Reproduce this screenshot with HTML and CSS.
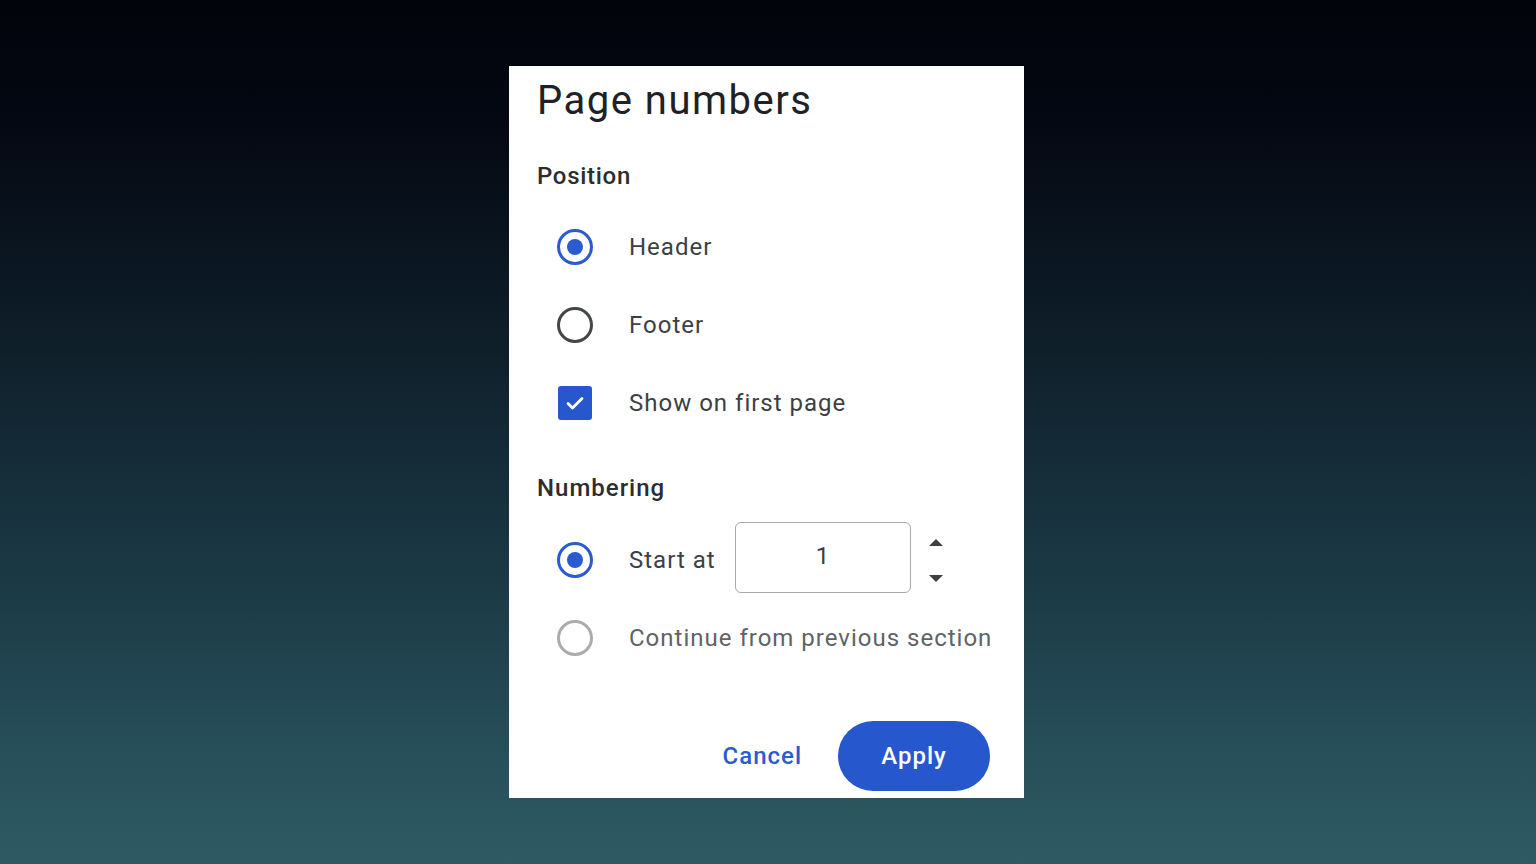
FILE: index.html
```html
<!DOCTYPE html>
<html lang="en">
<head>
<meta charset="utf-8">
<title>Page numbers</title>
<link rel="stylesheet" href="styles.css">
</head>
<body>
<main class="stage">
  <section class="dialog" role="dialog" aria-labelledby="dlg-title">
    <h1 class="dialog-title" id="dlg-title">Page numbers</h1>

    <h2 class="group-title">Position</h2>
    <div class="option">
      <span class="radio checked"></span>
      <span class="label">Header</span>
    </div>
    <div class="option">
      <span class="radio"></span>
      <span class="label">Footer</span>
    </div>
    <div class="option">
      <span class="checkbox">
        <svg viewBox="0 0 24 24" width="24" height="24"><path d="M5 12.5l4.5 4.5L19 7.5" fill="none" stroke="#fff" stroke-width="2.8" stroke-linecap="round" stroke-linejoin="round"/></svg>
      </span>
      <span class="label">Show on first page</span>
    </div>

    <h2 class="group-title numbering">Numbering</h2>
    <div class="option first">
      <span class="radio checked"></span>
      <span class="label">Start at</span>
      <div class="number-field">
        <span class="number-value">1</span>
      </div>
      <div class="spinner">
        <span class="arrow up"></span>
        <span class="arrow down"></span>
      </div>
    </div>
    <div class="option">
      <span class="radio muted"></span>
      <span class="label dim">Continue from previous section</span>
    </div>

    <div class="actions">
      <button class="btn-text" type="button">Cancel</button>
      <button class="btn-filled" type="button">Apply</button>
    </div>
  </section>
</main>
</body>
</html>
```

FILE: styles.css
```css
* { box-sizing: border-box; }

html, body {
  margin: 0;
  height: 100%;
}

body {
  font-family: Roboto, "Liberation Sans", Arial, sans-serif;
  background: linear-gradient(to bottom,
    #02030b 0%,
    #040812 14%,
    #0f1f2a 40%,
    #1b3a46 68%,
    #27505b 88%,
    #2f5963 100%);
  overflow: hidden;
}

.stage {
  height: 100%;
  display: flex;
  justify-content: flex-start;
  padding: 66px 0 0 509px;
}

.dialog {
  width: 515px;
  height: 732px;
  background: #fff;
  padding: 11px 34px 7px 28px;
  display: flex;
  flex-direction: column;
}

.dialog-title {
  margin: 0;
  font-size: 40px;
  line-height: 48px;
  font-weight: 400;
  color: #202124;
  letter-spacing: 1.5px;
}

.group-title {
  margin: 35px 0 16px;
  font-size: 24px;
  line-height: 32px;
  font-weight: 500;
  color: #2b2d30;
  letter-spacing: 0.7px;
}

.group-title.numbering {
  margin-top: 30px;
  margin-bottom: 17px;
  letter-spacing: 1px;
}

.option {
  height: 78px;
  display: flex;
  align-items: center;
  padding-left: 20px;
}

.radio {
  width: 36px;
  height: 36px;
  border-radius: 50%;
  border: 3px solid #444746;
  flex: none;
  display: flex;
  align-items: center;
  justify-content: center;
}

.radio.checked {
  border-color: #2a5bd0;
}

.radio.checked::after {
  content: "";
  width: 16px;
  height: 16px;
  border-radius: 50%;
  background: #2a5bd0;
}

.radio.muted {
  border-color: #acacac;
}

.checkbox {
  width: 34px;
  height: 34px;
  margin-left: 1px;
  margin-right: 1px;
  border-radius: 3px;
  background: #2757cc;
  flex: none;
  display: flex;
  align-items: center;
  justify-content: center;
}

.label {
  margin-left: 36px;
  font-size: 24px;
  color: #3c4043;
  letter-spacing: 1px;
  white-space: nowrap;
}

.label.dim {
  color: #5f6368;
}

.number-field {
  margin-left: 19px;
  width: 176px;
  height: 71px;
  border: 1.5px solid #a8a8a8;
  border-radius: 6px;
  display: flex;
  align-items: center;
  justify-content: center;
  margin-top: -6px;
  flex: none;
}

.number-value {
  font-size: 24px;
  color: #3c4043;
  margin-top: -2px;
}

.spinner {
  margin-left: 18px;
  height: 43px;
  display: flex;
  flex-direction: column;
  justify-content: space-between;
}

.arrow {
  width: 0;
  height: 0;
  border-left: 7px solid transparent;
  border-right: 7px solid transparent;
}

.arrow.up { border-bottom: 7px solid #3c4043; }
.arrow.down { border-top: 7px solid #3c4043; }

.actions {
  margin-top: auto;
  display: flex;
  justify-content: flex-end;
  align-items: center;
  gap: 36px;
}

.btn-text,
.btn-filled {
  font-family: inherit;
  font-size: 24px;
  font-weight: 500;
  border: none;
  cursor: pointer;
  letter-spacing: 1px;
}

.btn-text {
  background: none;
  color: #2a5bd0;
  padding: 0;
}

.btn-filled {
  width: 152px;
  height: 70px;
  border-radius: 35px;
  background: #2757cc;
  color: #fff;
}
```
